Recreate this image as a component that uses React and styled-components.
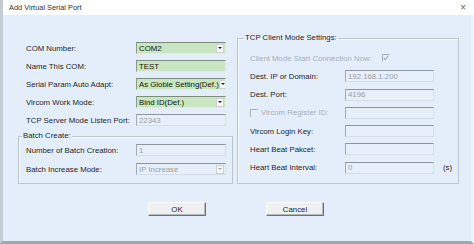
import React from "react";
import styled, { createGlobalStyle } from "styled-components";

const GlobalStyle = createGlobalStyle`
    html, body {
        margin: 0;
        padding: 0;
        background: #e4eefb;
    }
`;

const Window = styled.div`
    width: 474px;
    height: 244px;
    display: flex;
    flex-direction: column;
    font-family: "Liberation Sans", Arial, sans-serif;
    font-size: 7.8px;
    color: #1e1e1e;
    overflow: hidden;
`;

const TitleBar = styled.div`
    height: 15px;
    flex: none;
    display: flex;
    align-items: center;
    justify-content: space-between;
    background: #ffffff;
    padding: 0 8px 0 6px;
    border-left: 3px solid #c4ccd4;
    box-sizing: border-box;
    font-size: 7.4px;
    color: #333;
`;

const CloseMark = styled.span`
    font-size: 10px;
    color: #666;
    line-height: 1;
`;

const Body = styled.div`
    flex: 1;
    display: flex;
    flex-direction: column;
    background: #e4eefb;
    border-left: 3px solid #c4ccd4;
    border-right: 3px solid #eef4fd;
    border-bottom: 3px solid #9ea8b2;
`;

const Columns = styled.div`
    display: flex;
    align-items: flex-start;
    gap: 4px;
    padding-left: 15px;
`;

const LeftCol = styled.div`
    width: 215px;
    display: flex;
    flex-direction: column;
`;

const FieldList = styled.div`
    display: flex;
    flex-direction: column;
    gap: ${p => p.$gap || 6}px;
    padding-left: ${p => p.$indent || 0}px;
    margin-top: ${p => p.$top || 0}px;
`;

const Row = styled.div`
    display: flex;
    align-items: center;
    height: 12px;
`;

const Label = styled.span`
    width: ${p => p.$w}px;
    flex: none;
    white-space: nowrap;
    color: ${p => (p.$disabled ? "#a8aeb4" : "#1e1e1e")};
    display: flex;
    align-items: center;
    gap: 3px;
`;

const Input = styled.div`
    width: ${p => p.$w}px;
    height: ${p => p.$h || 12}px;
    box-sizing: border-box;
    flex: none;
    display: flex;
    align-items: center;
    justify-content: space-between;
    padding-left: 2px;
    background: ${p => (p.$green ? "#c9e6c3" : "#e6effa")};
    border-top: 1px solid ${p => (p.$green ? "#7f8a7d" : "#8e949a")};
    border-left: 1px solid ${p => (p.$green ? "#8f9a8d" : "#a4aab0")};
    border-right: 1px solid ${p => (p.$green ? "#dfeedd" : "#d6dee8")};
    border-bottom: 1px solid ${p => (p.$green ? "#dfeedd" : "#d6dee8")};
    color: ${p => (p.$green ? "#111" : "#9aa0a6")};
    white-space: nowrap;
    overflow: hidden;
`;

const Arrow = styled.span`
    width: 8px;
    height: 9px;
    flex: none;
    margin-right: 1px;
    background: #f6f7f8;
    border: 1px solid #ccd0d4;
    box-sizing: border-box;
    display: flex;
    align-items: center;
    justify-content: center;
    &::after {
        content: "";
        border-left: 2px solid transparent;
        border-right: 2px solid transparent;
        border-top: 2px solid ${p => (p.$disabled ? "#a0a4a8" : "#222")};
    }
`;

const GroupBox = styled.fieldset`
    margin: ${p => p.$top || 0}px 0 0 0;
    padding: ${p => p.$pad};
    width: ${p => p.$w}px;
    box-sizing: border-box;
    min-inline-size: 0;
    border: 1px solid #bcc4cc;
    box-shadow: inset 1px 1px 0 #f6f9fd;
    display: flex;
    flex-direction: column;
`;

const Legend = styled.legend`
    padding: 0 1px;
    margin-left: ${p => p.$offset || 0}px;
    line-height: 10px;
    font-size: 7.8px;
    color: #1e1e1e;
`;

const CheckBox = styled.span`
    width: 8px;
    height: 8px;
    box-sizing: border-box;
    display: inline-flex;
    align-items: center;
    justify-content: center;
    border-top: 1px solid #a8aeb4;
    border-left: 1px solid #a8aeb4;
    border-right: 1px solid #e8eef6;
    border-bottom: 1px solid #e8eef6;
    background: #e6effa;
`;

const Unit = styled.span`
    margin-left: 9px;
    color: #1e1e1e;
`;

const ButtonRow = styled.div`
    display: flex;
    gap: 60px;
    padding-left: 145px;
    margin-top: 18px;
`;

const Button = styled.button`
    width: 58px;
    height: 14px;
    padding: 0;
    font-family: "Liberation Sans", Arial, sans-serif;
    font-size: 7.8px;
    color: #1e1e1e;
    background: #eef0f2;
    border-top: 1px solid #ffffff;
    border-left: 1px solid #ffffff;
    border-right: 1px solid #6c7278;
    border-bottom: 1px solid #6c7278;
    box-shadow: inset -1px -1px 0 #b4b8bc;
`;

const Check = () => (
    <svg width="6" height="6" viewBox="0 0 6 6">
        <path d="M0.8 3 L2.4 4.6 L5.2 1" fill="none" stroke="#a8aeb4" strokeWidth="1.2" />
    </svg>
);

const leftFields = [
    { label: "COM Number:", value: "COM2", green: true, combo: true },
    { label: "Name This COM:", value: "TEST", green: true },
    { label: "Serial Param Auto Adapt:", value: "As Globle Setting(Def.)", green: true, combo: true },
    { label: "Vircom Work Mode:", value: "Bind ID(Def.)", green: true, combo: true },
    { label: "TCP Server Mode Listen Port:", value: "22343" },
];

const batchFields = [
    { label: "Number of Batch Creation:", value: "1" },
    { label: "Batch Increase Mode:", value: "IP Increase", combo: true },
];

const clientFields = [
    { label: "Dest. IP or Domain:", value: "192.168.1.200" },
    { label: "Dest. Port:", value: "4196" },
    { label: "Vircom Register ID:", value: "", disabled: true, check: true },
    { label: "Vircom Login Key:", value: "" },
    { label: "Heart Beat Pakcet:", value: "" },
    { label: "Heart Beat Interval:", value: "0", unit: "(s)" },
];

const Field = ({ f, labelW, inputW }) => (
    <Row>
        <Label $w={labelW} $disabled={f.disabled}>
            {f.check && <CheckBox />}
            {f.label}
        </Label>
        <Input $w={inputW} $green={f.green}>
            <span>{f.value}</span>
            {f.combo && <Arrow $disabled={!f.green} />}
        </Input>
        {f.unit && <Unit>{f.unit}</Unit>}
    </Row>
);

export default function App() {
    return (
        <Window>
            <GlobalStyle />
            <TitleBar>
                <span>Add Virtual Serial Port</span>
                <CloseMark>×</CloseMark>
            </TitleBar>
            <Body>
                <Columns>
                    <LeftCol>
                        <FieldList $top={27} $indent={8}>
                            {leftFields.map(f => (
                                <Field key={f.label} f={f} labelW={110} inputW={90} />
                            ))}
                        </FieldList>
                        <GroupBox $top={5} $w={215} $pad="3px 6px 8px 7px">
                            <Legend $offset={-4}>Batch Create:</Legend>
                            <FieldList $gap={7}>
                                {batchFields.map(f => (
                                    <Field key={f.label} f={f} labelW={110} inputW={90} />
                                ))}
                            </FieldList>
                        </GroupBox>
                    </LeftCol>
                    <GroupBox $top={18} $w={222} $pad="9px 6px 9px 12px">
                        <Legend $offset={-6}>TCP Client Mode Settings:</Legend>
                        <FieldList $gap={6.3}>
                            <Row>
                                <Label $w={132} $disabled>Client Mode Start Connection Now:</Label>
                                <CheckBox>
                                    <Check />
                                </CheckBox>
                            </Row>
                            {clientFields.map(f => (
                                <Field key={f.label} f={f} labelW={95} inputW={89} />
                            ))}
                        </FieldList>
                    </GroupBox>
                </Columns>
                <ButtonRow>
                    <Button>OK</Button>
                    <Button>Cancel</Button>
                </ButtonRow>
            </Body>
        </Window>
    );
}
